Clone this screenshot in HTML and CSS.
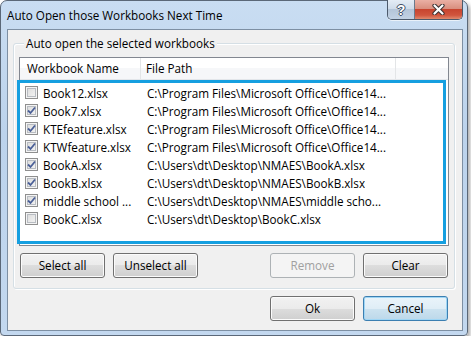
FILE: index.html
```html
<!DOCTYPE html>
<html lang="en">
<head>
  <meta charset="UTF-8" />
  <title>Auto Open those Workbooks Next Time</title>
  <link rel="stylesheet" href="styles.css">
</head>
<body>

  <div class="window">
    <div class="titlebar">
      <span class="title">Auto Open those Workbooks Next Time</span>
      <div class="caption">
        <div class="cap help">?</div>
        <div class="cap close">
          <svg width="13" height="11" viewBox="0 0 13 11">
            <path d="M2.5 1.5 L10.5 9.5 M10.5 1.5 L2.5 9.5" stroke="#3b3030" stroke-width="4.2" stroke-linecap="round"/>
            <path d="M2.5 1.5 L10.5 9.5 M10.5 1.5 L2.5 9.5" stroke="#ffffff" stroke-width="2.2" stroke-linecap="round"/>
          </svg>
        </div>
      </div>
    </div>

    <div class="client">
      <div class="group">
        <div class="group-label">Auto open the selected workbooks</div>

        <div class="list">
          <div class="list-head">
            <div class="col-name">Workbook Name</div>
            <div class="col-path">File Path</div>
            <div class="col-rest"></div>
          </div>
          <div class="list-body">
            <div class="row">
              <div class="cell-name"><span class="check"></span>Book12.xlsx</div>
              <div class="cell-path">C:\Program Files\Microsoft Office\Office14...</div>
            </div>
            <div class="row">
              <div class="cell-name"><span class="check on"><svg viewBox="0 0 11 11"><path d="M2 5.5 L4.5 8 L9 2.5"/></svg></span>Book7.xlsx</div>
              <div class="cell-path">C:\Program Files\Microsoft Office\Office14...</div>
            </div>
            <div class="row">
              <div class="cell-name"><span class="check on"><svg viewBox="0 0 11 11"><path d="M2 5.5 L4.5 8 L9 2.5"/></svg></span>KTEfeature.xlsx</div>
              <div class="cell-path">C:\Program Files\Microsoft Office\Office14...</div>
            </div>
            <div class="row">
              <div class="cell-name"><span class="check on"><svg viewBox="0 0 11 11"><path d="M2 5.5 L4.5 8 L9 2.5"/></svg></span>KTWfeature.xlsx</div>
              <div class="cell-path">C:\Program Files\Microsoft Office\Office14...</div>
            </div>
            <div class="row">
              <div class="cell-name"><span class="check on"><svg viewBox="0 0 11 11"><path d="M2 5.5 L4.5 8 L9 2.5"/></svg></span>BookA.xlsx</div>
              <div class="cell-path">C:\Users\dt\Desktop\NMAES\BookA.xlsx</div>
            </div>
            <div class="row">
              <div class="cell-name"><span class="check on"><svg viewBox="0 0 11 11"><path d="M2 5.5 L4.5 8 L9 2.5"/></svg></span>BookB.xlsx</div>
              <div class="cell-path">C:\Users\dt\Desktop\NMAES\BookB.xlsx</div>
            </div>
            <div class="row">
              <div class="cell-name"><span class="check on"><svg viewBox="0 0 11 11"><path d="M2 5.5 L4.5 8 L9 2.5"/></svg></span>middle school ...</div>
              <div class="cell-path">C:\Users\dt\Desktop\NMAES\middle scho...</div>
            </div>
            <div class="row">
              <div class="cell-name"><span class="check"></span>BookC.xlsx</div>
              <div class="cell-path">C:\Users\dt\Desktop\BookC.xlsx</div>
            </div>
          </div>
          <div class="highlight"></div>
        </div>

        <div class="btn-row">
          <button class="btn">Select all</button>
          <button class="btn">Unselect all</button>
          <span class="spacer"></span>
          <button class="btn" disabled>Remove</button>
          <button class="btn">Clear</button>
        </div>
      </div>

      <div class="footer">
        <button class="btn">Ok</button>
        <button class="btn default">Cancel</button>
      </div>
    </div>
  </div>

</body>
</html>
```

FILE: styles.css
```css
body {
  margin: 0;
  background: #ffffff;
  font-family: "Open Sans", "Noto Sans", sans-serif;
  font-size: 11.7px;
  color: #000;
}

.window {
  width: 468px;
  height: 336px;
  box-sizing: border-box;
  border: 1px solid #5b6878;
  border-radius: 7px 7px 4px 4px;
  background: linear-gradient(#c9ddf2, #bcd3ec 40%, #c3d8ef);
  box-shadow: 2px 3px 4px rgba(0,0,0,0.35);
  display: flex;
  flex-direction: column;
}

.titlebar {
  height: 28px;
  display: flex;
  align-items: center;
  padding-left: 6px;
}

.caption {
  margin-left: auto;
  margin-right: 4px;
  align-self: flex-start;
  margin-top: -1px;
  display: flex;
  height: 19px;
  border: 1px solid #4c5a6b;
  border-top: none;
  border-radius: 0 0 5px 5px;
  overflow: hidden;
  box-shadow: 0 1px 0 rgba(255,255,255,0.6);
}

.cap {
  display: flex;
  align-items: center;
  justify-content: center;
  height: 19px;
}

.help {
  width: 26px;
  border-right: 1px solid #6a7a8c;
  background: linear-gradient(#e4ecf5, #cfdcea 45%, #b4c5d8 50%, #c2d2e4);
  color: #fff;
  font-family: "Liberation Sans", sans-serif;
  font-weight: bold;
  font-size: 14px;
  text-shadow: 1px 0 #3f4f66, -1px 0 #3f4f66, 0 1px #3f4f66, 0 -1px #3f4f66;
}

.close {
  width: 47px;
  background: linear-gradient(#eab0a4, #d98f7f 45%, #c8452f 50%, #d1553d 80%, #e08a6e);
}

.client {
  margin: 0 4px 4px 6px;
  height: 303px;
  box-sizing: border-box;
  border: 1px solid #7d8fa3;
  background: #f0f0f0;
  display: flex;
  flex-direction: column;
}

.group {
  margin: 13px 7px 0 5px;
  border: 1px solid #d5dfe5;
  border-radius: 3px;
  box-shadow: inset 1px 1px 0 #fff, 1px 1px 0 #fff;
  padding: 0 5px 10px 5px;
  display: flex;
  flex-direction: column;
}

.group-label {
  align-self: flex-start;
  margin: -8px 0 0 5px;
  padding: 0 2px;
  line-height: 14px;
  background: #f0f0f0;
}

.list {
  position: relative;
  margin-top: 7px;
  height: 189px;
  box-sizing: border-box;
  border: 1px solid #828790;
  background: #ffffff;
}

.list-head {
  display: flex;
  height: 22px;
  background: linear-gradient(#ffffff 50%, #f6f7f9 50%);
  border-bottom: 1px solid #e3e6ea;
  box-sizing: border-box;
}

.list-head div {
  display: flex;
  align-items: center;
  box-sizing: border-box;
}

.col-name {
  width: 121px;
  padding-left: 7px;
  border-right: 1px solid #e3e5e7;
}

.col-path {
  width: 255px;
  padding-left: 5px;
  border-right: 1px solid #e3e5e7;
}

.col-rest {
  flex: 1;
}

.list-body {
  padding-top: 4px;
}

.row {
  display: flex;
  height: 18px;
  align-items: center;
  white-space: nowrap;
}

.cell-name {
  width: 121px;
  padding-left: 5px;
  box-sizing: border-box;
  display: flex;
  align-items: center;
  overflow: hidden;
}

.cell-path {
  padding-left: 6px;
  overflow: hidden;
}

.check {
  width: 13px;
  height: 13px;
  box-sizing: border-box;
  border: 1px solid #8f8f8f;
  margin-right: 5px;
  background: linear-gradient(135deg, #d8d8d8, #f7f7f7);
  box-shadow: inset 0 0 0 1px #f4f4f4, inset 0 0 0 2px #b8bcc2;
  flex: none;
  display: flex;
  align-items: center;
  justify-content: center;
}

.check svg {
  width: 11px;
  height: 11px;
}

.check svg path {
  fill: none;
  stroke: #4a5f97;
  stroke-width: 1.8;
}

.highlight {
  position: absolute;
  left: -3px;
  top: 22px;
  width: 429px;
  height: 164px;
  box-sizing: border-box;
  border: 3px solid #159fe0;
}

.btn-row {
  display: flex;
  gap: 8px;
  margin-top: 7px;
  padding: 0 1px;
}

.spacer {
  flex: 1;
}

.btn {
  width: 85px;
  height: 25px;
  box-sizing: border-box;
  border: 1px solid #707070;
  border-radius: 3px;
  background: linear-gradient(#f2f2f2, #ebebeb 50%, #dddddd 50%, #cfcfcf);
  box-shadow: inset 0 0 0 1px #fbfbfb;
  font-family: inherit;
  font-size: 11.7px;
  color: #000;
  padding: 0;
}

.btn:disabled {
  border-color: #adb2b5;
  background: #f4f4f4;
  box-shadow: none;
  color: #a0a0a0;
}

.btn.default {
  border-color: #3c7fb1;
  background: linear-gradient(#eaf4fa, #dfedf6 50%, #cde3f0 50%, #bcd8ea);
  box-shadow: inset 0 0 0 1px #9fd6f5;
}

.footer {
  display: flex;
  justify-content: flex-end;
  gap: 8px;
  margin-top: 7px;
  padding-right: 14px;
}
```
